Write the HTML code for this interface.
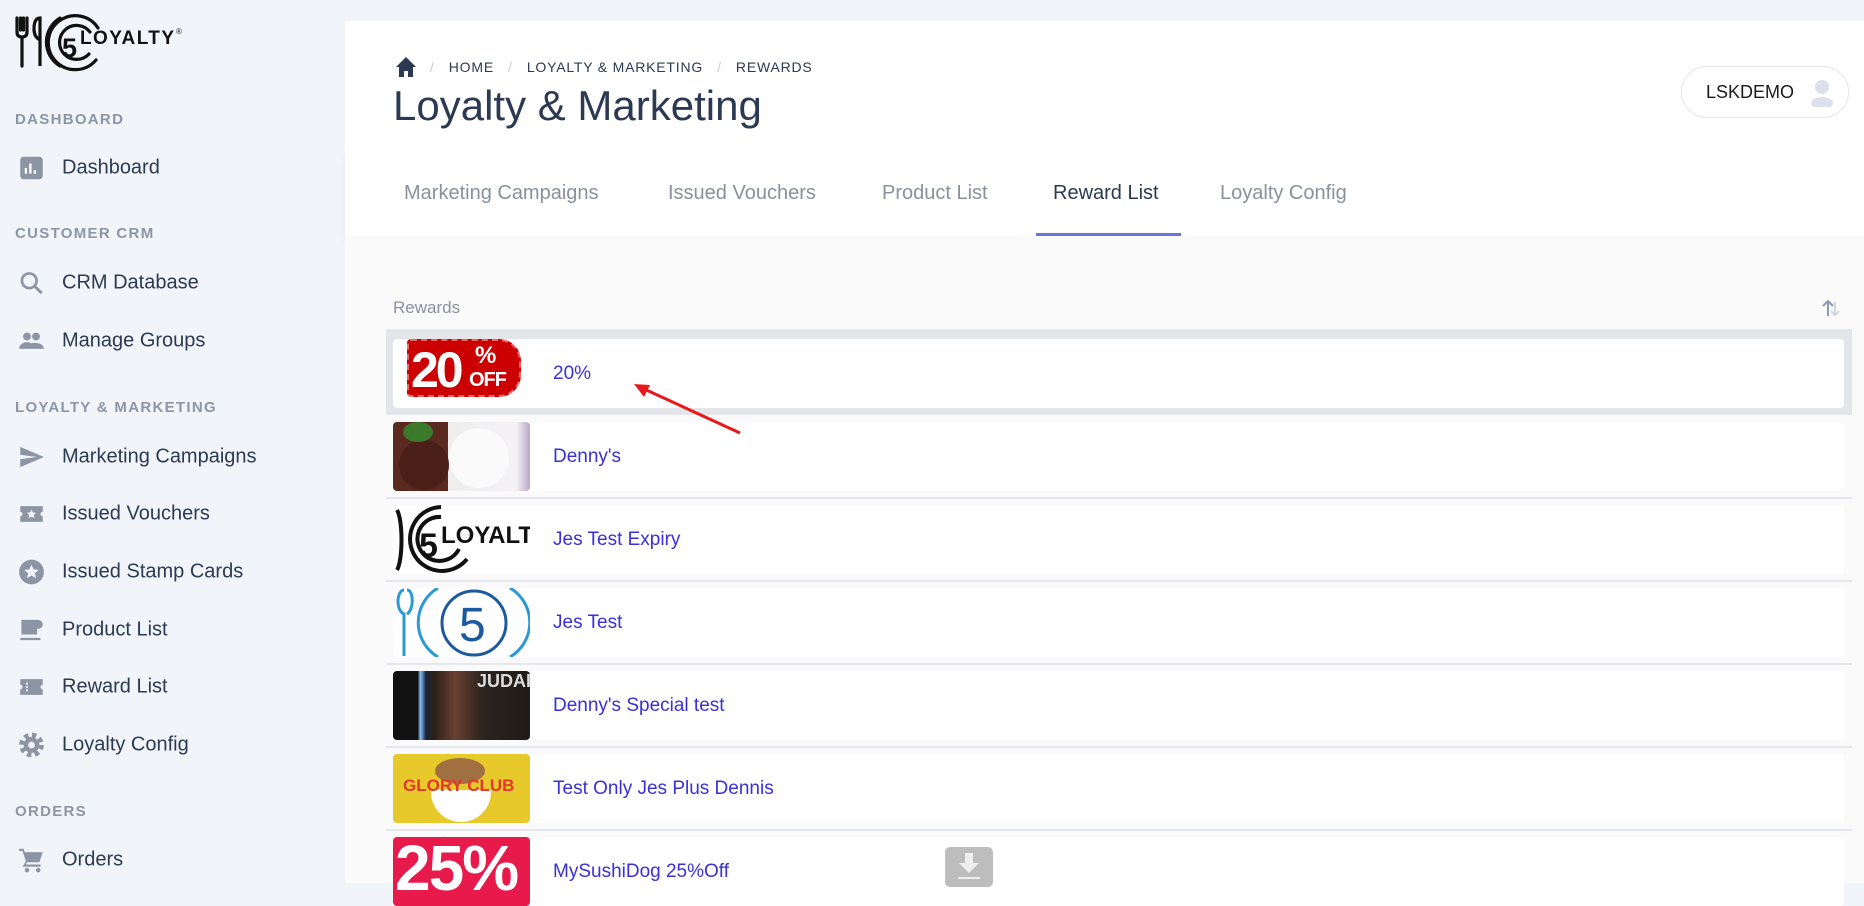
<!DOCTYPE html>
<html><head><meta charset="utf-8"><style>
*{margin:0;padding:0;box-sizing:border-box}
body{width:1864px;height:883px;overflow:hidden;background:#f1f4f9;font-family:"Liberation Sans",sans-serif;position:relative}
.a{position:absolute}
.lbl{position:absolute;left:15px;font-size:15px;font-weight:bold;letter-spacing:1.3px;color:#8d95a5}
.it{position:absolute;left:62px;font-size:20px;color:#2b3a52;transform:translateY(-50%)}
.ic{position:absolute;left:18px;width:27px;height:27px;transform:translateY(-50%)}
.tab{position:absolute;top:182px;font-size:20px;color:#8a919d;font-weight:500}
.row{position:absolute;left:393px;width:1451px;height:69px;background:#fff;border-radius:4px}
.sep{position:absolute;left:386px;width:1466px;height:2px;background:#e4e7ec}
.img{position:absolute;left:0;top:0;width:137px;height:69px;border-radius:4px;overflow:hidden}
.nm{position:absolute;left:160px;top:50%;transform:translateY(-50%);font-size:19px;color:#3a2fd8;font-weight:500;white-space:nowrap}
</style></head><body>
<!-- sidebar logo -->
<svg class="a" style="left:14px;top:10px" width="175" height="64" viewBox="0 0 175 64">
<g fill="none" stroke="#111" stroke-width="3.2" stroke-linecap="round">
<path d="M3 8v14q0 5 5 5q5 0 5-5V8M6.5 8v12M9.5 8v12M8 27v29"/>
<path d="M26 56V30q-6-3-6-11q0-11 6-11z"/>
<path d="M46 8a28 28 0 0 0 0 48"/>
<path d="M84 18a27 27 0 1 0 -2 32"/>
<path d="M76 22a17 17 0 1 0 -1 22"/>
</g>
<text x="48" y="47" font-family="Liberation Sans" font-weight="bold" font-size="27" fill="#111">5</text>
<text x="66" y="34" font-family="Liberation Sans" font-weight="bold" font-size="19" fill="#111" textLength="94">LOYALTY</text>
<text x="162" y="24" font-size="8" fill="#111">®</text>
</svg>
<div class="lbl" style="top:111px">DASHBOARD</div>
<svg class="ic" style="top:168px" viewBox="0 0 24 24"><rect x="2" y="2" width="20" height="20" rx="3" fill="#8d95a5"/><path d="M7 17v-5M11 17V8M15 17v-3" stroke="#fff" stroke-width="2"/></svg>
<div class="it" style="top:168px">Dashboard</div>
<div class="lbl" style="top:225px">CUSTOMER CRM</div>
<svg class="ic" style="top:283px" viewBox="0 0 24 24"><circle cx="10" cy="10" r="6.5" fill="none" stroke="#8d95a5" stroke-width="2.4"/><path d="M15 15l6 6" stroke="#8d95a5" stroke-width="2.6"/></svg>
<div class="it" style="top:283px">CRM Database</div>
<svg class="ic" style="top:341px" viewBox="0 0 24 24" fill="#8d95a5"><circle cx="8" cy="8" r="3.5"/><circle cx="16" cy="8" r="3.5"/><path d="M1 19c0-4 4-6 7-6s7 2 7 6zM14 19c0-2-1-4-2-5 4-1 11 0 11 5z"/></svg>
<div class="it" style="top:341px">Manage Groups</div>
<div class="lbl" style="top:399px">LOYALTY &amp; MARKETING</div>
<svg class="ic" style="top:457px" viewBox="0 0 24 24"><path d="M2 3l21 9-21 9v-7l15-2-15-2z" fill="#8d95a5"/></svg>
<div class="it" style="top:457px">Marketing Campaigns</div>
<svg class="ic" style="top:514px" viewBox="0 0 24 24"><path d="M2 5h20v5a2 2 0 0 0 0 4v5H2v-5a2 2 0 0 0 0-4z" fill="#8d95a5"/><path d="M12 8l1.2 2.6 2.8.3-2 2 .6 2.8-2.6-1.4-2.6 1.4.6-2.8-2-2 2.8-.3z" fill="#f1f4f9"/></svg>
<div class="it" style="top:514px">Issued Vouchers</div>
<svg class="ic" style="top:572px" viewBox="0 0 24 24"><circle cx="12" cy="12" r="11" fill="#8d95a5"/><path d="M12 5.5l1.9 4.2 4.5.4-3.4 3 1 4.4-4-2.4-4 2.4 1-4.4-3.4-3 4.5-.4z" fill="#f1f4f9"/></svg>
<div class="it" style="top:572px">Issued Stamp Cards</div>
<svg class="ic" style="top:630px" viewBox="0 0 24 24" fill="#8d95a5"><path d="M3 3h15a3 3 0 0 1 0 8h-1v5H3z"/><rect x="2" y="19" width="18" height="2"/></svg>
<div class="it" style="top:630px">Product List</div>
<svg class="ic" style="top:687px" viewBox="0 0 24 24"><path d="M2 5h20v5a2 2 0 0 0 0 4v5H2v-5a2 2 0 0 0 0-4z" fill="#8d95a5"/><path d="M8 8v2M8 11v2M8 14v2" stroke="#f1f4f9" stroke-width="1.5"/></svg>
<div class="it" style="top:687px">Reward List</div>
<svg class="ic" style="top:745px" viewBox="0 0 24 24"><circle cx="12" cy="12" r="8" fill="none" stroke="#8d95a5" stroke-width="6" stroke-dasharray="3.5 2.8"/><circle cx="12" cy="12" r="7" fill="#8d95a5"/><circle cx="12" cy="12" r="3" fill="#f1f4f9"/></svg>
<div class="it" style="top:745px">Loyalty Config</div>
<div class="lbl" style="top:803px">ORDERS</div>
<svg class="ic" style="top:860px" viewBox="0 0 24 24" fill="#8d95a5"><path d="M1 2h4l1 3h16l-3 9H8l-1 2h13v2H4l3-5L4 4H1z"/><circle cx="8" cy="21" r="2"/><circle cx="18" cy="21" r="2"/></svg>
<div class="it" style="top:860px">Orders</div>

<!-- header -->
<div class="a" style="left:345px;top:21px;width:1519px;height:132px;background:#fff"></div>
<div class="a" style="left:345px;top:153px;width:1519px;height:83px;background:#fff;box-shadow:0 4px 10px rgba(0,0,0,.05)"></div>
<div class="a" style="left:345px;top:236px;width:1519px;height:647px;background:#fafafb"></div>
<svg class="a" style="left:395px;top:56px" width="22" height="22" viewBox="0 0 22 22"><path d="M11 1L1 11h3v10h5v-6h4v6h5V11h3z" fill="#2b3a52"/></svg>
<div class="a" style="left:430px;top:59px;font-size:14px;letter-spacing:.8px;color:#2b3a52"><span style="color:#ccc">/</span>&nbsp;&nbsp; HOME &nbsp;&nbsp;<span style="color:#ccc">/</span>&nbsp;&nbsp; LOYALTY &amp; MARKETING &nbsp;&nbsp;<span style="color:#ccc">/</span>&nbsp;&nbsp; REWARDS</div>
<div class="a" style="left:393px;top:82px;font-size:42px;color:#2b3a52">Loyalty &amp; Marketing</div>
<div class="a" style="left:1681px;top:66px;width:168px;height:52px;border:1px solid #e2e5ec;border-radius:26px;background:#fff"></div>
<div class="a" style="left:1706px;top:82px;font-size:18px;color:#1a1a1a">LSKDEMO</div>
<svg class="a" style="left:1810px;top:79px" width="24" height="28" viewBox="0 0 24 28"><circle cx="12" cy="8" r="7" fill="#dde0ea"/><ellipse cx="12" cy="24" rx="11" ry="6" fill="#dde0ea"/></svg>

<div class="tab" style="left:404px">Marketing Campaigns</div>
<div class="tab" style="left:668px">Issued Vouchers</div>
<div class="tab" style="left:882px">Product List</div>
<div class="tab" style="left:1053px;color:#2b3a52">Reward List</div>
<div class="tab" style="left:1220px">Loyalty Config</div>
<div class="a" style="left:1036px;top:233px;width:145px;height:3px;background:#6875e0"></div>

<div class="a" style="left:393px;top:298px;font-size:17px;color:#8a919d">Rewards</div>
<svg class="a" style="left:1820px;top:298px" width="22" height="20" viewBox="0 0 22 20"><path d="M8 18V3M3 8l5-5 5 5" stroke="#8a9ab5" stroke-width="2" fill="none"/><path d="M15 4v13M11 13l4 4 4-4" stroke="#d0d4de" stroke-width="2" fill="none"/></svg>

<div class="a" style="left:386px;top:329px;width:1466px;height:86px;background:#e4e5e8"></div>
<div class="row" style="top:339px"><div class="img"><div class="a" style="left:14px;top:0;width:114px;height:58px;background:#c00;border-radius:4px 22px 22px 4px;border:2px dashed #e66"></div><div class="a" style="left:18px;top:2px;font-size:50px;font-weight:bold;color:#fff;letter-spacing:-3px">20</div><div class="a" style="left:82px;top:3px;font-size:24px;font-weight:bold;color:#fff">%</div><div class="a" style="left:76px;top:30px;font-size:20px;font-weight:bold;color:#fff;letter-spacing:-1px">OFF</div></div><div class="nm">20%</div></div>

<div class="row" style="top:422px"><div class="img" style="background:linear-gradient(90deg,#5a2a20 0 40%,#eee 40%,#f4f2f6 90%,#b9a6c8)"><div class="a" style="left:6px;top:18px;width:50px;height:50px;border-radius:50%;background:#4a1f18"></div><div class="a" style="left:56px;top:6px;width:60px;height:60px;border-radius:50%;background:#fafafa"></div><div class="a" style="left:10px;top:0;width:30px;height:20px;background:#3a7a2a;border-radius:50%"></div></div><div class="nm">Denny's</div></div>
<div class="sep" style="top:497px"></div>
<div class="row" style="top:505px"><div class="img" style="background:#fff"><svg width="137" height="69" viewBox="0 0 137 69"><g fill="none" stroke="#111" stroke-width="4"><path d="M48 2a32 32 0 1 0 26 52"/><path d="M48 12a22 22 0 1 0 18 32"/><path d="M4 5c6 10 6 50 0 60"/></g><text x="26" y="52" font-family="Liberation Sans" font-weight="bold" font-size="34" fill="#111">5</text><text x="48" y="38" font-family="Liberation Sans" font-weight="bold" font-size="24" fill="#111">LOYALT</text></svg></div><div class="nm">Jes Test Expiry</div></div>
<div class="sep" style="top:580px"></div>
<div class="row" style="top:588px"><div class="img" style="background:#fff"><svg width="137" height="69" viewBox="0 0 137 69"><g fill="none" stroke-width="3"><path d="M11 2c-7 0-9 20 0 24v42" stroke="#2a9ad6"/><path d="M14 26c7-4 7-24 0-24" stroke="#2a9ad6"/><path d="M45 0a40 40 0 0 0 0 69" stroke="#2a9ad6"/><path d="M117 0a40 40 0 0 1 0 69" stroke="#2a9ad6"/><circle cx="81" cy="35" r="32" stroke="#1c5aa0"/></g><text x="66" y="53" font-family="Liberation Sans" font-size="48" fill="#1c5aa0">5</text></svg></div><div class="nm">Jes Test</div></div>
<div class="sep" style="top:663px"></div>
<div class="row" style="top:671px"><div class="img" style="background:linear-gradient(90deg,#111 0 18%,#8bc4ff 20%,#1a2438 24%,#2a2018 30%,#6a4030 45%,#2d241f 65%,#1e1a18)"><div class="a" style="left:84px;top:0;font-size:18px;font-weight:bold;color:#ddd">JUDAI</div></div><div class="nm">Denny's Special test</div></div>
<div class="sep" style="top:746px"></div>
<div class="row" style="top:754px"><div class="img" style="background:#e8c92c"><div class="a" style="left:42px;top:4px;width:50px;height:26px;border-radius:50%;background:#a07040"></div><div class="a" style="left:38px;top:36px;width:60px;height:32px;border-radius:0 0 30px 30px;background:#fff"></div><div class="a" style="left:10px;top:22px;font-size:17px;font-weight:bold;color:#e3372b;white-space:nowrap">GLORY CLUB</div></div><div class="nm">Test Only Jes Plus Dennis</div></div>
<div class="sep" style="top:829px"></div>
<div class="row" style="top:837px"><div class="img" style="background:#e81a4b"><div class="a" style="left:2px;top:-6px;font-size:64px;font-weight:bold;color:#fff;letter-spacing:-2px">25%</div></div><div class="nm">MySushiDog 25%Off</div>
<div class="a" style="left:552px;top:10px;width:48px;height:40px;border-radius:5px;background:#bdbdbd"><svg width="48" height="40" viewBox="0 0 48 40"><path d="M20 6h8v10h6l-10 10-10-10h6z" fill="#eee"/><rect x="13" y="30" width="22" height="2" fill="#eee"/></svg></div></div>

<svg class="a" style="left:620px;top:375px" width="130" height="70" viewBox="0 0 130 70"><path d="M120 58L22 13" stroke="#e8191b" stroke-width="3"/><path d="M14 9l16 1-6 12z" fill="#e8191b"/></svg>
</body></html>
